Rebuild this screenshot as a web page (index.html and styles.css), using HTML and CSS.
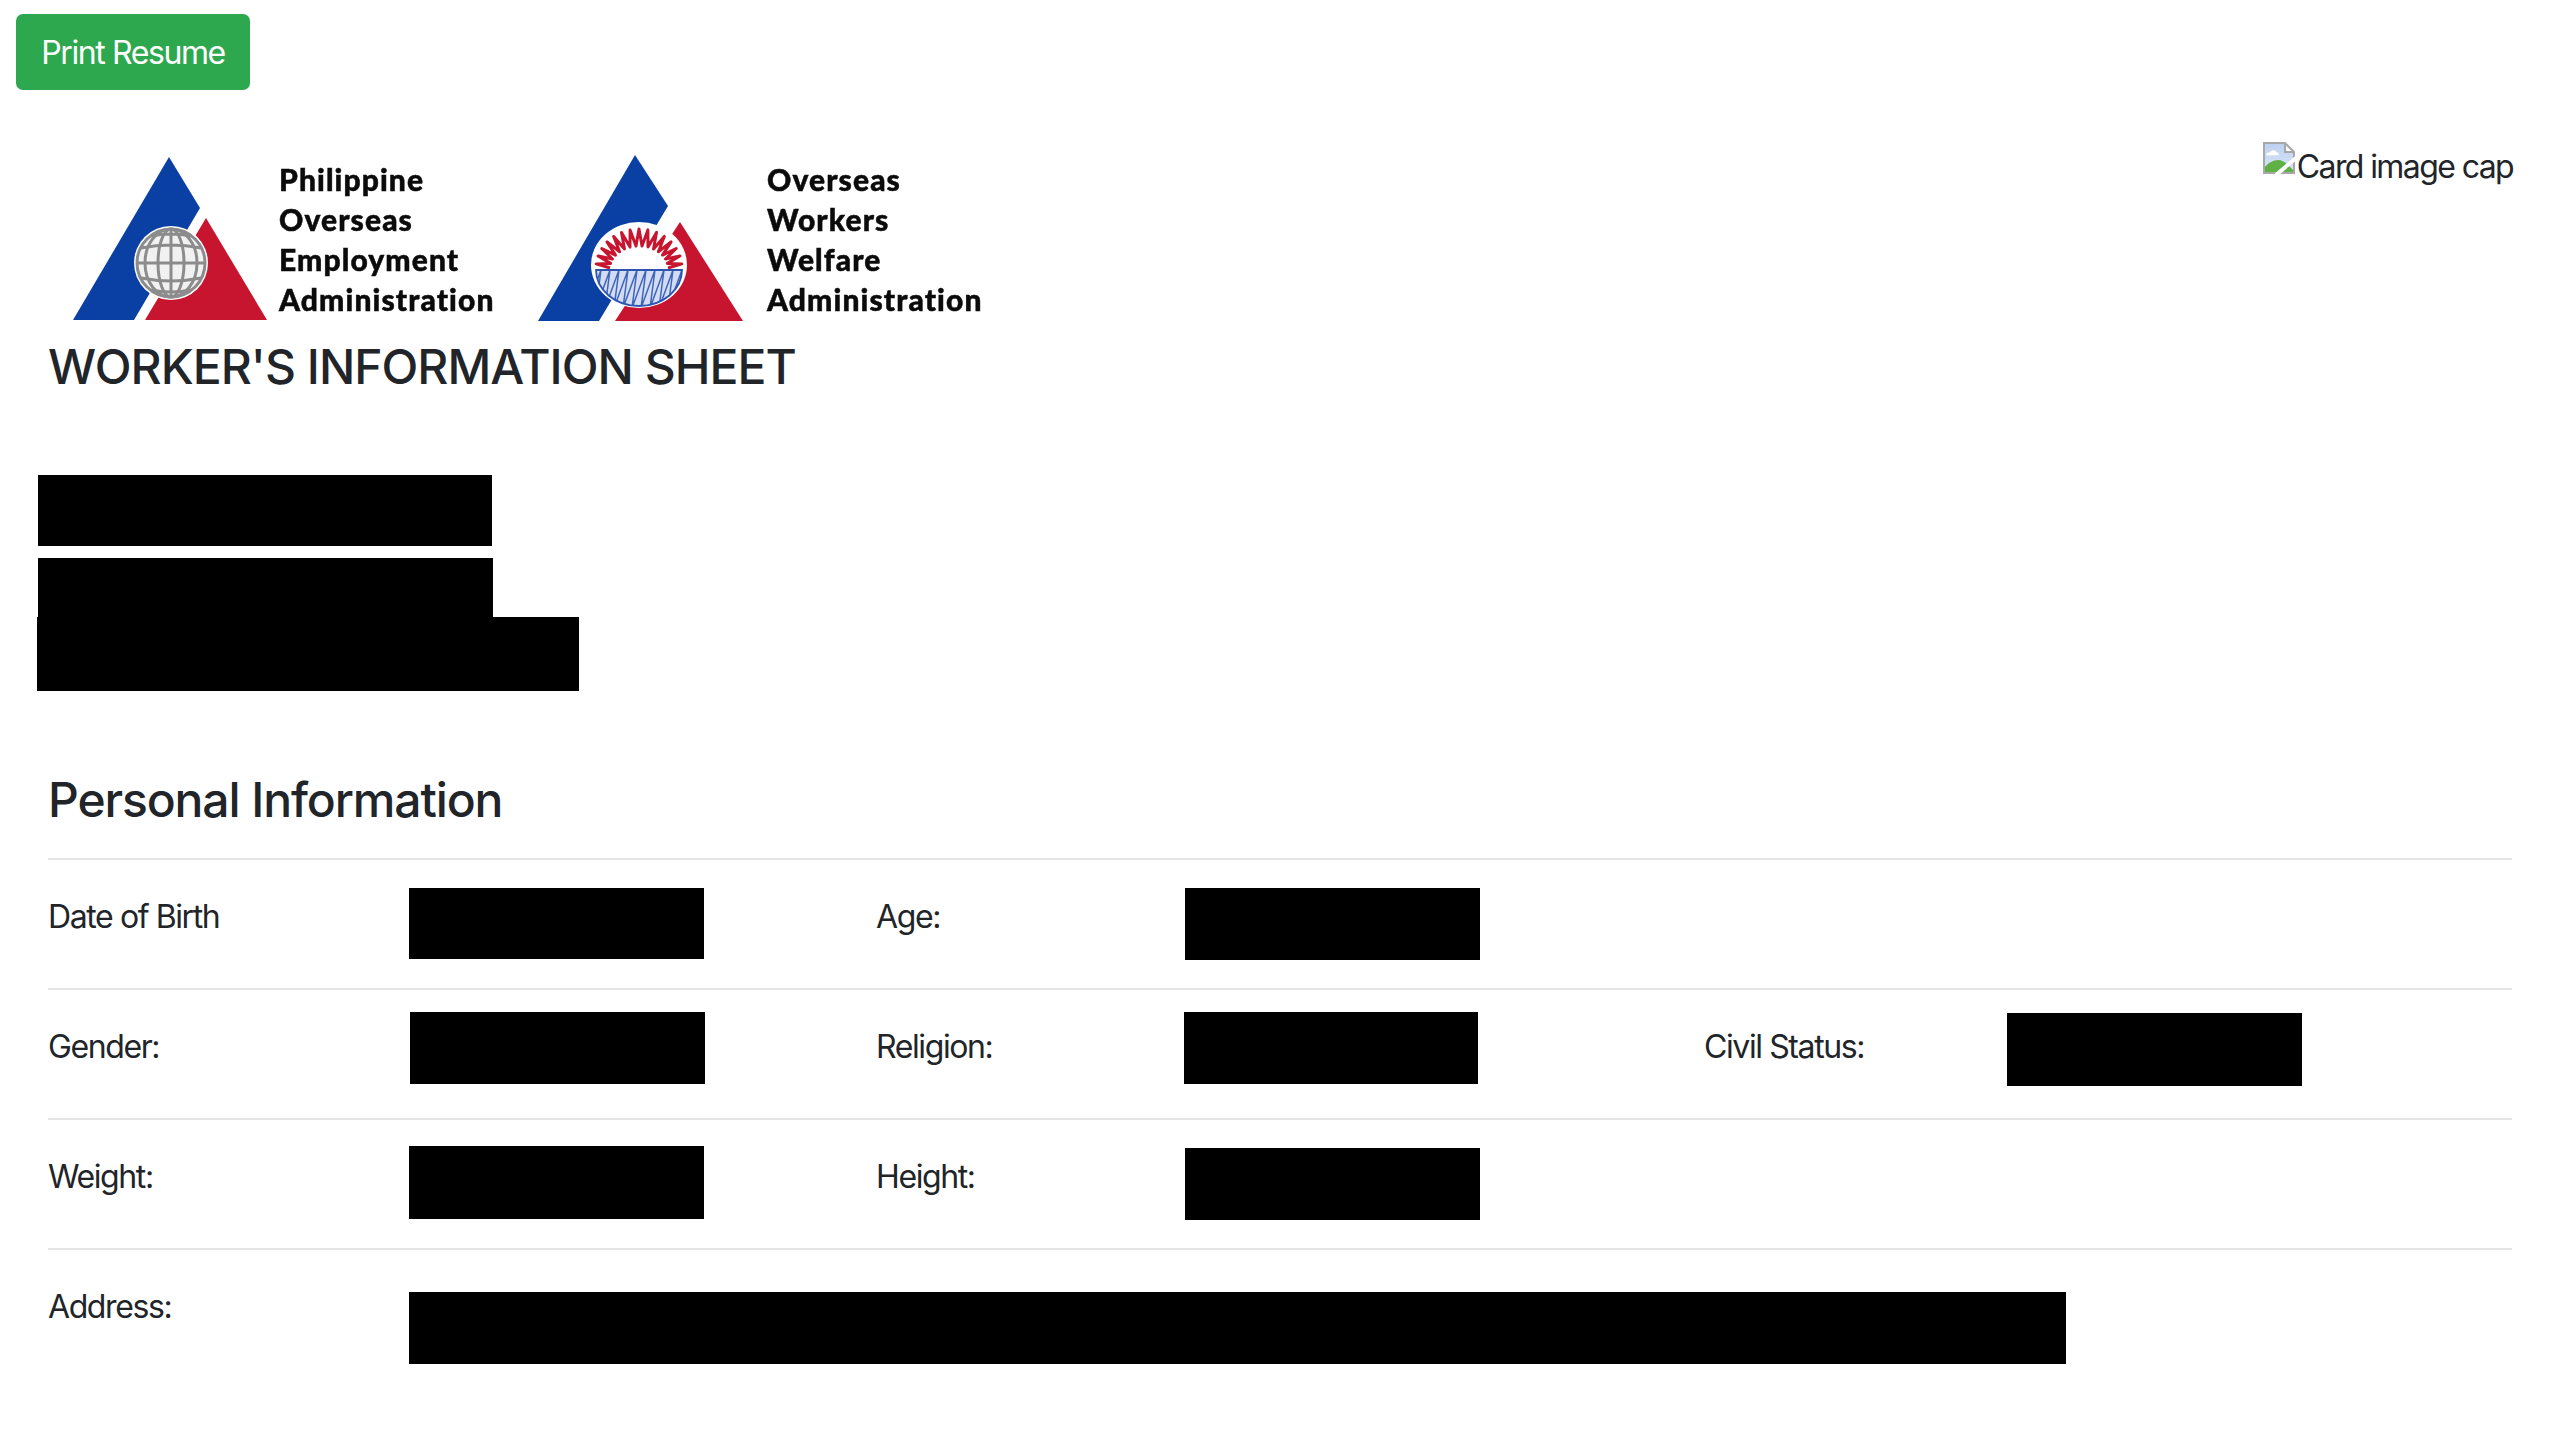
FILE: index.html
```html
<!DOCTYPE html>
<html lang="en">
<head>
<meta charset="utf-8">
<title>Worker's Information Sheet</title>
<link rel="stylesheet" href="styles.css">
</head>
<body>
<button class="print-btn" type="button">Print Resume</button>

<header class="banner">
  <div class="logos">
    <svg class="logo logo-poea" viewBox="64 150 210 180" aria-hidden="true">
      <polygon class="blue" points="169,157 200,208 134,320 73,320"/>
      <polygon class="red" points="206,218 267,320 145,320"/>
      <circle class="halo" cx="171" cy="263" r="37"/>
      <g class="globe" transform="translate(171 263)">
        <circle r="34"/>
        <ellipse rx="13" ry="34"/>
        <ellipse rx="26" ry="34"/>
        <path d="M0-34V34M-34 0H34M-30-15Q0-21 30-15M-30 15Q0 21 30 15M-20-27Q0-31 20-27M-20 27Q0 31 20 27"/>
      </g>
    </svg>
    <div class="logo-text logo-text-poea">
      <span>Philippine</span><span>Overseas</span><span>Employment</span><span>Administration</span>
    </div>
    <svg class="logo logo-owwa" viewBox="530 150 220 180" aria-hidden="true">
      <defs>
        <clipPath id="water"><path d="M-43 2H43A43 36 0 0 1-43 2Z"/></clipPath>
      </defs>
      <polygon class="blue" points="635,155 668,206 599,321 538,321"/>
      <polygon class="red" points="680,222 743,321 615,321"/>
      <ellipse class="halo" cx="639" cy="265" rx="48" ry="43"/>
      <g transform="translate(639 268)">
        <polyline class="rays" points="-29,0 -42.8,-4.1 -28.4,-4.6 -40.9,-12.1 -26.5,-9 -37.2,-19.5 -23.5,-12.9 -32,-26.1 -19.4,-16.3 -25.3,-31.6 -14.5,-19.1 -17.5,-35.6 -9,-20.9 -8.9,-38.1 -3,-21.9 0,-39 3,-21.9 8.9,-38.1 9,-20.9 17.5,-35.6 14.5,-19.1 25.3,-31.6 19.4,-16.3 32,-26.1 23.5,-12.9 37.2,-19.5 26.5,-9 40.9,-12.1 28.4,-4.6 42.8,-4.1 29,0"/>
        <path class="water-fill" d="M-43 2H43A43 36 0 0 1-43 2Z"/>
        <g clip-path="url(#water)">
          <polyline class="waves" points="-52,40 -38,2 -43,40 -29,2 -34,40 -20,2 -25,40 -11,2 -16,40 -2,2 -7,40 7,2 2,40 16,2 11,40 25,2 20,40 34,2 29,40 43,2 38,40 52,2"/>
        </g>
        <path class="water-edge" d="M-43 2H43A43 36 0 0 1-43 2Z"/>
      </g>
    </svg>
    <div class="logo-text logo-text-owwa">
      <span>Overseas</span><span>Workers</span><span>Welfare</span><span>Administration</span>
    </div>
  </div>
  <div class="card-image">
    <svg class="broken" viewBox="0 0 16 16" aria-hidden="true">
      <defs>
        <linearGradient id="sky" x1="0" y1="0" x2="0" y2="1">
          <stop offset="0" stop-color="#bdd0f0"/>
          <stop offset="1" stop-color="#dce7f8"/>
        </linearGradient>
      </defs>
      <path fill="url(#sky)" d="M.5.5H11L15.5 5V15.5H.5Z"/>
      <path class="broken-hill" d="M.5 15.5V13C2.5 10.5 5 9 7.5 9C10 9 12.5 11 15.5 14.5V15.5Z"/>
      <path class="broken-cloud" d="M1.5 6.6C1.5 5.4 2.8 5 3.4 5.3C3.8 3.8 6.4 3.6 6.8 5.2C8 5.1 8.4 6.6 7.2 6.6Z"/>
      <path class="broken-fold" d="M11 .5V5H15.5Z"/>
      <path class="broken-edge" d="M.5.5H11L15.5 5V15.5H.5ZM11 .5V5H15.5"/>
      <path class="broken-tear" d="M6.5 16.5L16.5 8"/>
    </svg><span class="card-alt">Card image cap</span>
  </div>
</header>

<main class="sheet">
  <h1 class="sheet-title">WORKER'S INFORMATION SHEET</h1>

  <div class="name-block">
    <div class="redact name-a"></div>
    <div class="redact name-b"></div>
    <div class="redact name-c"></div>
  </div>

  <h2 class="section-title">Personal Information</h2>

  <section class="info">
    <div class="row">
      <div class="label">Date of Birth</div>
      <div class="redact value top-29"></div>
      <div class="label">Age:</div>
      <div class="redact value top-30"></div>
    </div>
    <div class="row">
      <div class="label">Gender:</div>
      <div class="redact value top-24 nudge"></div>
      <div class="label">Religion:</div>
      <div class="redact value top-24 pull"></div>
      <div class="label">Civil Status:</div>
      <div class="redact value top-25"></div>
    </div>
    <div class="row">
      <div class="label">Weight:</div>
      <div class="redact value top-28"></div>
      <div class="label">Height:</div>
      <div class="redact value top-30"></div>
    </div>
    <div class="row">
      <div class="label">Address:</div>
      <div class="redact value-wide top-43"></div>
    </div>
  </section>
</main>
</body>
</html>
```
FILE: styles.css
```css
* { box-sizing: border-box; }

html, body { margin: 0; background: #fff; }

body {
  font-family: Inter, "Liberation Sans", sans-serif;
  font-size: 32px;
  line-height: 48px;
  color: #212529;
  letter-spacing: -1.4px;
}

.print-btn {
  display: block;
  width: 234px;
  height: 76px;
  margin: 14px 0 0 16px;
  padding: 2px 0 0;
  border: 0;
  border-radius: 7px;
  background: #2ea84f;
  color: #fff;
  font: inherit;
  letter-spacing: inherit;
}

.banner {
  display: flex;
  justify-content: space-between;
  align-items: flex-start;
  margin-top: 52px;
  padding: 0 47px 0 64px;
}

.logos {
  display: flex;
  align-items: flex-start;
  margin-top: 8px;
  filter: blur(0.7px);
}

.logo { display: block; height: 180px; }
.logo-poea { width: 210px; }
.logo-owwa { width: 220px; margin-left: 34px; }

.blue { fill: #0a3fa3; }
.red { fill: #c8152f; }
.halo { fill: #fff; }

.globe * { fill: none; stroke: #8c8c8c; stroke-width: 3; }
.globe > circle { fill: #f1f1f1; }

.rays { fill: none; stroke: #c8152f; stroke-width: 3; stroke-linejoin: round; }
.water-fill { fill: #d3dcf2; }
.waves { fill: none; stroke: #3f66bb; stroke-width: 1.5; stroke-linejoin: round; }
.water-edge { fill: none; stroke: #2b55b0; stroke-width: 1.8; }

.logo-text {
  display: flex;
  flex-direction: column;
  margin-top: 9px;
  font-family: Lato, "Liberation Sans", sans-serif;
  font-weight: 900;
  font-size: 30px;
  line-height: 40px;
  letter-spacing: 1.1px;
  color: #0b0b0b;
  -webkit-text-stroke: 0.5px #0b0b0b;
}
.logo-text-poea { width: 217px; margin-left: 5px; }
.logo-text-owwa { margin-left: 17px; }

.card-image { display: flex; align-items: flex-start; }
.card-alt { margin-top: 1px; letter-spacing: -1.6px; }
.broken { display: block; width: 32px; height: 32px; margin-right: 2px; }
.broken-hill { fill: #5fb045; }
.broken-cloud { fill: #fff; }
.broken-fold { fill: #fff; }
.broken-edge { fill: none; stroke: #a8a8a8; stroke-width: 1; }
.broken-tear { fill: none; stroke: #fff; stroke-width: 2; }

.sheet { padding: 8px 48px 0; }

.sheet-title,
.section-title {
  margin: 0;
  font-size: 48px;
  font-weight: 500;
  line-height: 58px;
}

.sheet-title { letter-spacing: -0.97px; }

.section-title { margin-bottom: 29px; letter-spacing: -1.1px; }

.redact { background: #000; }

.name-block { margin: 79px 0 80px -10px; }
.name-a { width: 454px; height: 71px; margin-bottom: 12px; }
.name-b { width: 455px; height: 59px; }
.name-c { width: 542px; height: 74px; margin-left: -1px; }

.row {
  display: grid;
  grid-template-columns: 361px 467px 309px 519px 303px 505px;
  align-items: start;
  height: 130px;
  border-top: 2px solid #e4e4e4;
}

.label { margin-top: 33px; }

.value { width: 295px; height: 72px; }
.value-wide { grid-column: 2 / span 5; width: 1657px; height: 72px; }

.top-24 { margin-top: 22px; }
.top-25 { margin-top: 23px; height: 73px; }
.top-28 { margin-top: 26px; height: 73px; }
.top-29 { margin-top: 28px; height: 71px; }
.top-30 { margin-top: 28px; }
.top-43 { margin-top: 42px; }

.nudge { margin-left: 1px; }
.pull { margin-left: -1px; width: 294px; }
```
